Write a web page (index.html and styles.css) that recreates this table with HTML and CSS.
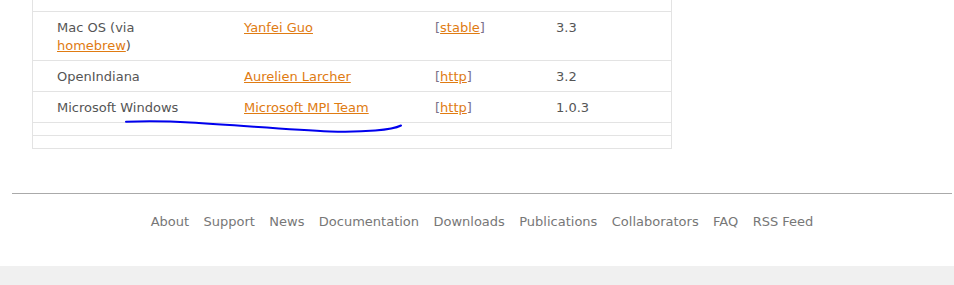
FILE: index.html
```html
<!DOCTYPE html>
<html>
<head>
<meta charset="utf-8">
<link rel="stylesheet" href="styles.css">
</head>
<body>
<div class="page">
  <div class="table-wrap">
    <table class="ports">
      <colgroup>
        <col class="c1"><col class="c2"><col class="c3"><col class="c4">
      </colgroup>
      <tr class="cut"><td></td><td></td><td></td><td></td></tr>
      <tr>
        <td>Mac OS (via <a href="#">homebrew</a>)</td>
        <td><a href="#">Yanfei Guo</a></td>
        <td><span class="br">[</span><a href="#">stable</a><span class="br">]</span></td>
        <td>3.3</td>
      </tr>
      <tr>
        <td>OpenIndiana</td>
        <td><a href="#">Aurelien Larcher</a></td>
        <td><span class="br">[</span><a href="#">http</a><span class="br">]</span></td>
        <td>3.2</td>
      </tr>
      <tr>
        <td>Microsoft Windows</td>
        <td><a href="#">Microsoft MPI Team</a></td>
        <td><span class="br">[</span><a href="#">http</a><span class="br">]</span></td>
        <td>1.0.3</td>
      </tr>
      <tr class="empty"><td></td><td></td><td></td><td></td></tr>
      <tr class="empty"><td></td><td></td><td></td><td></td></tr>
    </table>
  </div>
  <footer class="footer">
    <hr class="rule">
    <nav class="links">
      <a href="#">About</a>
      <a href="#">Support</a>
      <a href="#">News</a>
      <a href="#">Documentation</a>
      <a href="#">Downloads</a>
      <a href="#">Publications</a>
      <a href="#">Collaborators</a>
      <a href="#">FAQ</a>
      <a href="#">RSS Feed</a>
    </nav>
  </footer>
</div>
<div class="band"></div>
<svg class="scribble" width="954" height="150" viewBox="0 0 954 150">
  <path d="M126 121.7 C 150 121, 165 121, 190 122.5 C 240 125.5, 290 129.5, 330 131.5 C 365 132.5, 392 130, 401 125.5" fill="none" stroke="#0000ee" stroke-width="2" stroke-linecap="round"/>
</svg>
</body>
</html>
```
FILE: styles.css
```css
html, body {
  margin: 0;
  padding: 0;
  background: #ffffff;
}
body {
  font-family: "DejaVu Sans", Verdana, sans-serif;
  font-size: 13px;
  color: #555555;
  width: 954px;
  height: 285px;
  overflow: hidden;
  position: relative;
}
.page {
  padding: 0 2px 0 12px;
}
.table-wrap {
  margin-left: 20px;
  width: 638px;
  border: 1px solid #e3e3e3;
  border-top: none;
}
.ports {
  border-collapse: collapse;
  width: 638px;
  table-layout: fixed;
}
.c1 { width: 187px; }
.c2 { width: 191px; }
.c3 { width: 121px; }
.c4 { width: 139px; }
.ports td {
  padding: 7px 24px 5px;
  line-height: 18px;
  vertical-align: top;
  border-top: 1px solid #e3e3e3;
}
.ports tr.cut td {
  border-top: none;
  padding: 0;
  height: 11px;
}
.ports tr.empty td {
  padding: 6px 24px;
  height: 0;
  line-height: 0;
}
.ports a {
  color: #e07b12;
  text-decoration: underline;
}
.br {
  color: #7a7088;
}
.footer {
  margin-top: 44px;
}
.rule {
  margin: 0;
  border: none;
  border-top: 1px solid #aaaaaa;
  height: 0;
}
.links {
  display: flex;
  justify-content: center;
  gap: 14.4px;
  padding-top: 19px;
  line-height: 18px;
}
.links a {
  color: #777777;
  text-decoration: none;
}
.band {
  position: absolute;
  left: 0;
  top: 266px;
  width: 954px;
  height: 19px;
  background: #f0f0f0;
}
.scribble {
  position: absolute;
  left: 0;
  top: 0;
  pointer-events: none;
}
```
